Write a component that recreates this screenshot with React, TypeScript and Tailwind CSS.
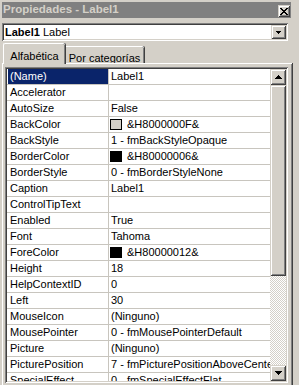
const rows: { name: string; value: string; swatch?: string }[] = [
  { name: "(Name)", value: "Label1" },
  { name: "Accelerator", value: "" },
  { name: "AutoSize", value: "False" },
  { name: "BackColor", value: "&H8000000F&", swatch: "bg-[#d4d0c8]" },
  { name: "BackStyle", value: "1 - fmBackStyleOpaque" },
  { name: "BorderColor", value: "&H80000006&", swatch: "bg-black" },
  { name: "BorderStyle", value: "0 - fmBorderStyleNone" },
  { name: "Caption", value: "Label1" },
  { name: "ControlTipText", value: "" },
  { name: "Enabled", value: "True" },
  { name: "Font", value: "Tahoma" },
  { name: "ForeColor", value: "&H80000012&", swatch: "bg-black" },
  { name: "Height", value: "18" },
  { name: "HelpContextID", value: "0" },
  { name: "Left", value: "30" },
  { name: "MouseIcon", value: "(Ninguno)" },
  { name: "MousePointer", value: "0 - fmMousePointerDefault" },
  { name: "Picture", value: "(Ninguno)" },
  { name: "PicturePosition", value: "7 - fmPicturePositionAboveCenter" },
  { name: "SpecialEffect", value: "0 - fmSpecialEffectFlat" },
];

const closeGlyph = ["11....11", ".11..11.", "..1111..", "...11...", "..1111..", ".11..11.", "11....11"];

const PixelGlyph = ({ pattern }: { pattern: string[] }) => (
  <svg width={pattern[0].length} height={pattern.length} shapeRendering="crispEdges">
    {pattern.map((line, y) =>
      line.split("").map((c, x) => (c === "1" ? <rect key={`${x}-${y}`} x={x} y={y} width={1} height={1} fill="#000" /> : null))
    )}
  </svg>
);

const Arrow = ({ down = false, size = 4 }: { down?: boolean; size?: number }) => (
  <svg width={size * 2 - 1} height={size} shapeRendering="crispEdges">
    {Array.from({ length: size }).map((_, i) => {
      const row = down ? size - 1 - i : i;
      return <rect key={i} x={size - 1 - row} y={i} width={row * 2 + 1} height={1} fill="#000" />;
    })}
  </svg>
);

const raised =
  "shadow-[inset_1px_1px_#d4d0c8,inset_-1px_-1px_#404040,inset_2px_2px_#ffffff,inset_-2px_-2px_#808080]";
const sunken =
  "shadow-[inset_1px_1px_#808080,inset_-1px_-1px_#ffffff,inset_2px_2px_#404040,inset_-2px_-2px_#d4d0c8]";

export default function App() {
  return (
    <div className="h-[385px] w-[299px] overflow-hidden bg-[#d4d0c8] pl-[2px] pt-[2px] font-['Liberation_Sans',Arial,sans-serif] text-[11px] text-black">
      <div className="flex w-[289px] flex-col">
        {/* title bar */}
        <div className="flex h-[16px] items-center justify-between bg-[#808080] pl-[1px] pr-[1px]">
          <span className="text-[11.5px] font-bold leading-none text-[#d4d0c8]">Propiedades - Label1</span>
          <div className={`mt-[2px] flex h-[12px] w-[12px] items-center justify-center bg-[#d4d0c8] ${raised}`}>
            <PixelGlyph pattern={closeGlyph} />
          </div>
        </div>

        {/* object combo */}
        <div className={`mt-[5px] flex h-[18px] w-[286px] bg-white p-[2px] ${sunken}`}>
          <div className="flex flex-1 items-center pl-[1px] leading-none">
            <span className="font-bold">Label1</span>
            <span>&nbsp;Label</span>
          </div>
          <div className={`flex h-full w-[15px] items-center justify-center bg-[#d4d0c8] ${raised}`}>
            <Arrow down size={3} />
          </div>
        </div>

        {/* tabs */}
        <div className="mt-[2px] flex h-[21px] items-start">
          <div className="relative z-10 ml-[1px] flex h-[21px] w-[62px] items-start justify-center rounded-t-[2px] border-l border-t border-white bg-[#d4d0c8] pt-[4px] shadow-[inset_-1px_0_#808080,1px_0_#404040]">
            Alfabética
          </div>
          <div className="mt-[3px] flex h-[18px] w-[79px] items-start justify-center rounded-tr-[2px] border-t border-white bg-[#d4d0c8] pt-[3px] shadow-[inset_-1px_0_#808080,1px_0_#404040]">
            Por categorías
          </div>
        </div>

        {/* tab panel */}
        <div className="-mt-px flex h-[322px] w-[290px] flex-col border-l border-t border-white pl-[2px] pt-[3px] shadow-[inset_-1px_0_#808080,1px_0_#404040]">
          <div className={`flex h-[316px] w-[283px] p-[2px] ${sunken}`}>
            <div className="flex w-[263px] flex-col overflow-hidden bg-white">
              {rows.map((r, i) => (
                <div key={r.name} className="flex h-[16px] shrink-0 border-b border-[#c8c5be] leading-[15px]">
                  <div className="flex w-[102px] shrink-0 border-r border-[#c8c5be] pl-[1px]">
                    <div className={`flex-1 whitespace-nowrap pl-[2px] ${i === 0 ? "bg-[#0a246a] text-white" : ""}`}>
                      {r.name}
                    </div>
                  </div>
                  <div className="flex min-w-0 flex-1 items-center overflow-hidden whitespace-nowrap pl-[1px]">
                    {r.swatch && <span className={`mr-[5px] h-[11px] w-[12px] shrink-0 border border-black ${r.swatch}`} />}
                    <span className={r.swatch ? "" : "pl-[1px]"}>{r.value}</span>
                  </div>
                </div>
              ))}
            </div>

            {/* scrollbar */}
            <div className="flex w-[16px] flex-col">
              <div className={`flex h-[16px] items-center justify-center bg-[#d4d0c8] ${raised}`}>
                <Arrow size={4} />
              </div>
              <div className={`h-[191px] bg-[#d4d0c8] ${raised}`} />
              <div className="flex-1 bg-[image:repeating-conic-gradient(#ffffff_0_25%,#d4d0c8_0_50%)] bg-[length:2px_2px]" />
              <div className={`flex h-[16px] items-center justify-center bg-[#d4d0c8] ${raised}`}>
                <Arrow down size={4} />
              </div>
            </div>
          </div>
        </div>
      </div>
    </div>
  );
}
